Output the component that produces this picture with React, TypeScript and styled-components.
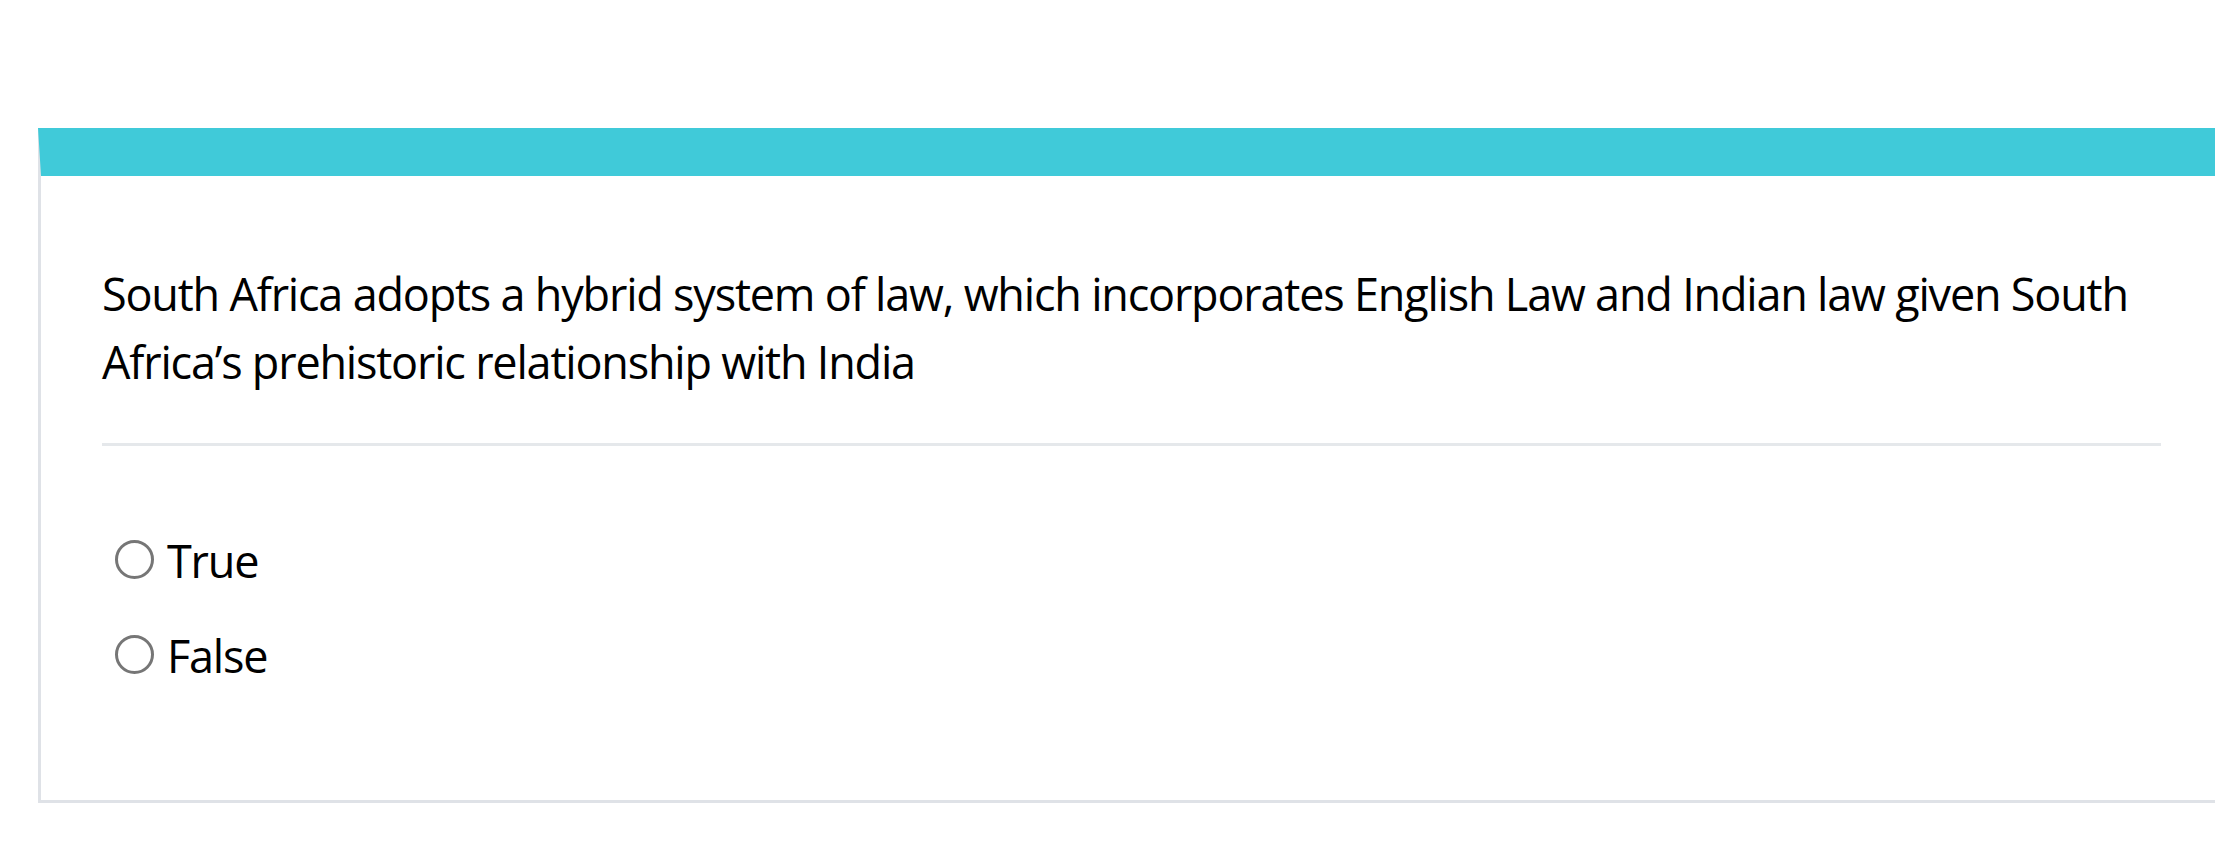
import React from 'react'
import styled, { createGlobalStyle } from 'styled-components'

const GlobalStyle = createGlobalStyle`
  html, body {
    margin: 0;
    padding: 0;
    background: #ffffff;
    overflow: hidden;
  }
  body {
    font-family: "Open Sans", "Noto Sans", sans-serif;
    color: #000000;
  }
`

const options = ['True', 'False']

export default function App() {
  return (
    <>
      <GlobalStyle />
      <Page>
        <QuestionCard>
          <QuestionText>
            South Africa adopts a hybrid system of law, which incorporates English Law and Indian law given South
            Africa’s prehistoric relationship with India
          </QuestionText>
          <Divider />
          <OptionList>
            {options.map((opt) => (
              <OptionRow key={opt}>
                <RadioCircle />
                <OptionLabel>{opt}</OptionLabel>
              </OptionRow>
            ))}
          </OptionList>
        </QuestionCard>
      </Page>
    </>
  )
}

const Page = styled.div`
  padding-top: 128px;
  padding-left: 38px;
  height: 861px;
  box-sizing: border-box;
`

const QuestionCard = styled.div`
  width: 2187px;
  box-sizing: border-box;
  border: 3px solid #dfe2e7;
  border-top: 48px solid #40cad9;
  padding: 84px 61px 110px 61px;
`

const QuestionText = styled.div`
  font-size: 45px;
  line-height: 68px;
  letter-spacing: -1.2px;
`

const Divider = styled.div`
  height: 3px;
  background: #e5e8eb;
  margin-top: 47px;
`

const OptionList = styled.div`
  display: flex;
  flex-direction: column;
  gap: 27px;
  margin-top: 81px;
`

const OptionRow = styled.label`
  display: flex;
  align-items: center;
  height: 68px;
`

const RadioCircle = styled.span`
  width: 39px;
  height: 39px;
  box-sizing: border-box;
  border: 3px solid #767676;
  border-radius: 50%;
  margin-left: 13px;
  margin-right: 13px;
  margin-top: -4px;
  flex-shrink: 0;
`

const OptionLabel = styled.span`
  font-size: 45px;
  line-height: 68px;
  letter-spacing: -1.2px;
`
